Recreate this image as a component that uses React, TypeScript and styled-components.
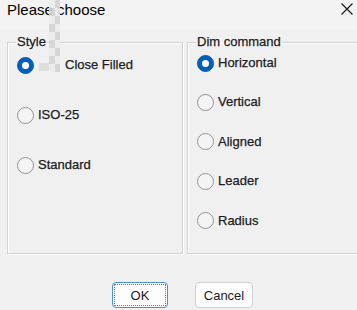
import React from "react";
import styled, { createGlobalStyle } from "styled-components";

const STYLES = [
  { label: "Close Filled", checked: true, indent: 31 },
  { label: "ISO-25", checked: false, indent: 4 },
  { label: "Standard", checked: false, indent: 4 },
];

const COMMANDS = ["Horizontal", "Vertical", "Aligned", "Leader", "Radius"];

const GlobalStyle = createGlobalStyle`
  html, body {
    margin: 0;
    padding: 0;
    background: #f0f0f0;
    overflow: hidden;
  }
  body {
    font-family: "Liberation Sans", Arial, sans-serif;
    color: #000;
  }
`;

export default function App() {
  return (
    <>
      <GlobalStyle />
      <Window>
        <TitleBar>
          <Title>Please choose</Title>
          <CloseIcon width="12" height="12" viewBox="0 0 12 12">
            <path d="M0.5 0.5 L11.5 11.5 M11.5 0.5 L0.5 11.5" stroke="#1a1a1a" strokeWidth="1.2" />
          </CloseIcon>
        </TitleBar>
        <Body>
          <Groups>
            <Group $width={176}>
              <Legend>Style</Legend>
              <List $top={7} $gap={34}>
                {STYLES.map((s) => (
                  <Option key={s.label} $indent={s.indent}>
                    <Radio $checked={s.checked} />
                    <span>{s.label}</span>
                  </Option>
                ))}
              </List>
            </Group>
            <Group>
              <Legend>Dim command</Legend>
              <List $top={5} $gap={23.4}>
                {COMMANDS.map((c, i) => (
                  <Option key={c} $indent={4}>
                    <Radio $checked={i === 0} />
                    <span>{c}</span>
                  </Option>
                ))}
              </List>
            </Group>
          </Groups>
          <Buttons>
            <Button $focused $width={56}>OK</Button>
            <Button $width={58}>Cancel</Button>
          </Buttons>
        </Body>
        <Smear />
        <SmearFoot />
      </Window>
    </>
  );
}

const Window = styled.div`
  position: relative;
  width: 365px;
  height: 310px;
  background: #f0f0f0;
`;

const TitleBar = styled.div`
  height: 30px;
  box-sizing: border-box;
  display: flex;
  justify-content: space-between;
  align-items: flex-start;
  padding: 1px 12px 0 7px;
  background: #f3f3f3;
`;

const Title = styled.div`
  font-size: 15px;
  line-height: 18px;
`;

const CloseIcon = styled.svg`
  margin-top: 2px;
  display: block;
`;

const Body = styled.div`
  padding: 4px 7px 0;
`;

const Groups = styled.div`
  display: flex;
  gap: 4px;
`;

const Group = styled.fieldset<{ $width?: number }>`
  margin: 0;
  padding: 0 0 0 9px;
  box-sizing: border-box;
  height: 220px;
  min-width: 0;
  ${(p) => (p.$width ? `width: ${p.$width}px; flex: none;` : "flex: 1;")}
  border: 1px solid #d2d2d2;
  box-shadow: inset 1px 1px 0 #fff, 1px 1px 0 #fff;
`;

const Legend = styled.legend`
  margin-left: -1px;
  padding: 0 1px;
  font-size: 13px;
  line-height: 16px;
  color: #1b1b24;
  -webkit-text-stroke: 0.25px #1b1b24;
`;

const List = styled.div<{ $top: number; $gap: number }>`
  display: flex;
  flex-direction: column;
  padding-top: ${(p) => p.$top}px;
  gap: ${(p) => p.$gap}px;
`;

const Option = styled.label<{ $indent: number }>`
  display: flex;
  align-items: center;
  gap: ${(p) => p.$indent}px;
  height: 16px;
  font-size: 13px;
  line-height: 16px;
  white-space: nowrap;
  color: #1b1b24;
  -webkit-text-stroke: 0.25px #1b1b24;
`;

const Radio = styled.span<{ $checked: boolean }>`
  flex: none;
  width: 17px;
  height: 17px;
  box-sizing: border-box;
  border-radius: 50%;
  position: relative;
  ${(p) =>
    p.$checked
      ? `background: #005fb8; border: 1px solid #005fb8;`
      : `background: #f4f4f4; border: 1.5px solid #939393;`}
  &::after {
    content: "";
    display: ${(p) => (p.$checked ? "block" : "none")};
    position: absolute;
    left: 50%;
    top: 50%;
    width: 7px;
    height: 7px;
    margin: -3.5px 0 0 -3.5px;
    border-radius: 50%;
    background: #fff;
  }
`;

const Buttons = styled.div`
  display: flex;
  justify-content: center;
  gap: 27px;
  margin-top: 28px;
`;

const Button = styled.button<{ $focused?: boolean; $width: number }>`
  position: relative;
  width: ${(p) => p.$width}px;
  height: 26px;
  padding: 0;
  font-family: "Liberation Sans", Arial, sans-serif;
  font-size: 13px;
  color: #1b1b24;
  background: #fdfdfd;
  border-radius: 4px;
  border: 1px solid ${(p) => (p.$focused ? "#4a8fdc" : "#d0d0d0")};
  &::after {
    content: "";
    display: ${(p) => (p.$focused ? "block" : "none")};
    position: absolute;
    inset: 1px;
    border: 1px dotted #7a7a7a;
  }
`;

const Smear = styled.div`
  position: absolute;
  left: 49px;
  top: 0;
  width: 11px;
  height: 72px;
  background: repeating-conic-gradient(#d3d3d3 0 25%, #ececec 0 50%) 0 0 / 12px 16px;
  opacity: 0.9;
`;

const SmearFoot = styled.div`
  position: absolute;
  left: 39px;
  top: 63px;
  width: 10px;
  height: 8px;
  background: #dedede;
`;
